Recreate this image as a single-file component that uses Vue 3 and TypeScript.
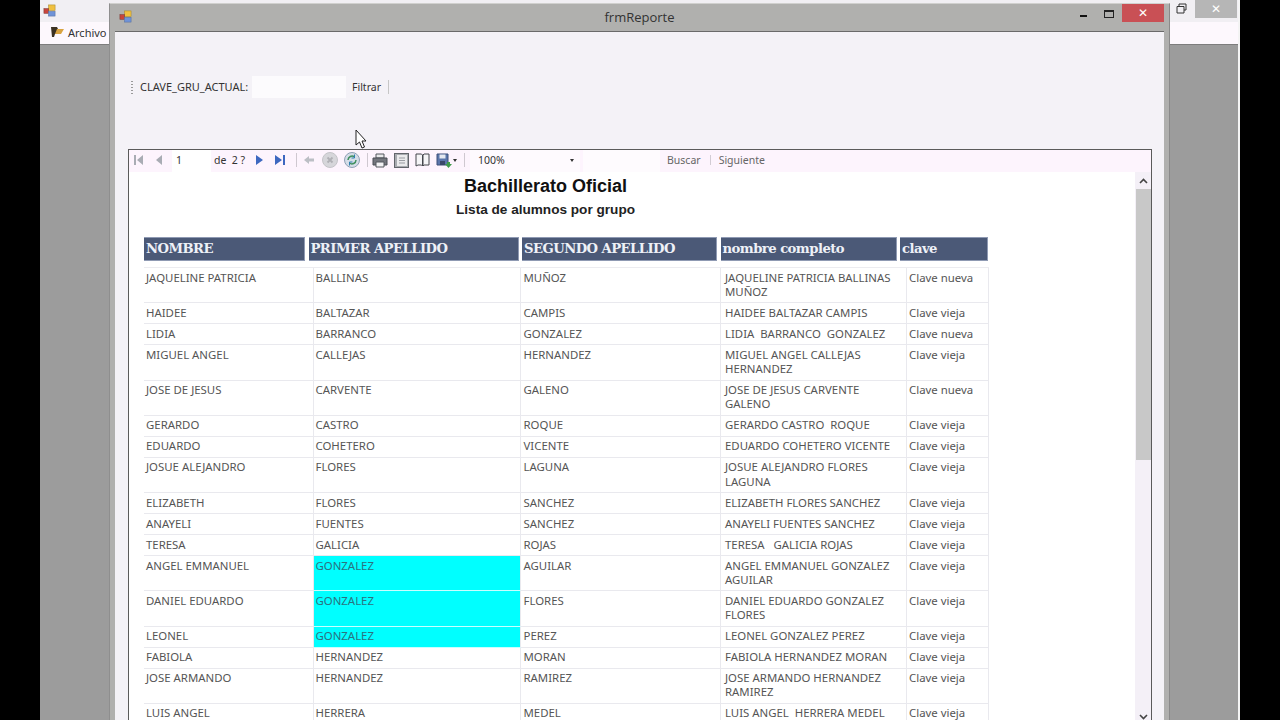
<script setup lang="ts">
interface Row {
  nombre: string
  primer: string
  segundo: string
  completo: string
  clave: string
  hit?: boolean
}

const columns: string[] = ['NOMBRE', 'PRIMER APELLIDO', 'SEGUNDO APELLIDO', 'nombre completo', 'clave']

const rows: Row[] = [
  { nombre: 'JAQUELINE PATRICIA', primer: 'BALLINAS', segundo: 'MUÑOZ', completo: 'JAQUELINE PATRICIA BALLINAS MUÑOZ', clave: 'Clave nueva' },
  { nombre: 'HAIDEE', primer: 'BALTAZAR', segundo: 'CAMPIS', completo: 'HAIDEE BALTAZAR CAMPIS', clave: 'Clave vieja' },
  { nombre: 'LIDIA', primer: 'BARRANCO', segundo: 'GONZALEZ', completo: 'LIDIA  BARRANCO  GONZALEZ', clave: 'Clave nueva' },
  { nombre: 'MIGUEL ANGEL', primer: 'CALLEJAS', segundo: 'HERNANDEZ', completo: 'MIGUEL ANGEL CALLEJAS HERNANDEZ', clave: 'Clave vieja' },
  { nombre: 'JOSE DE JESUS', primer: 'CARVENTE', segundo: 'GALENO', completo: 'JOSE DE JESUS CARVENTE GALENO', clave: 'Clave nueva' },
  { nombre: 'GERARDO', primer: 'CASTRO', segundo: 'ROQUE', completo: 'GERARDO CASTRO  ROQUE', clave: 'Clave vieja' },
  { nombre: 'EDUARDO', primer: 'COHETERO', segundo: 'VICENTE', completo: 'EDUARDO COHETERO VICENTE', clave: 'Clave vieja' },
  { nombre: 'JOSUE ALEJANDRO', primer: 'FLORES', segundo: 'LAGUNA', completo: 'JOSUE ALEJANDRO FLORES LAGUNA', clave: 'Clave vieja' },
  { nombre: 'ELIZABETH', primer: 'FLORES', segundo: 'SANCHEZ', completo: 'ELIZABETH FLORES SANCHEZ', clave: 'Clave vieja' },
  { nombre: 'ANAYELI', primer: 'FUENTES', segundo: 'SANCHEZ', completo: 'ANAYELI FUENTES SANCHEZ', clave: 'Clave vieja' },
  { nombre: 'TERESA', primer: 'GALICIA', segundo: 'ROJAS', completo: 'TERESA   GALICIA ROJAS', clave: 'Clave vieja' },
  { nombre: 'ANGEL EMMANUEL', primer: 'GONZALEZ', segundo: 'AGUILAR', completo: 'ANGEL EMMANUEL GONZALEZ AGUILAR', clave: 'Clave vieja', hit: true },
  { nombre: 'DANIEL EDUARDO', primer: 'GONZALEZ', segundo: 'FLORES', completo: 'DANIEL EDUARDO GONZALEZ FLORES', clave: 'Clave vieja', hit: true },
  { nombre: 'LEONEL', primer: 'GONZALEZ', segundo: 'PEREZ', completo: 'LEONEL GONZALEZ PEREZ', clave: 'Clave vieja', hit: true },
  { nombre: 'FABIOLA', primer: 'HERNANDEZ', segundo: 'MORAN', completo: 'FABIOLA HERNANDEZ MORAN', clave: 'Clave vieja' },
  { nombre: 'JOSE ARMANDO', primer: 'HERNANDEZ', segundo: 'RAMIREZ', completo: 'JOSE ARMANDO HERNANDEZ RAMIREZ', clave: 'Clave vieja' },
  { nombre: 'LUIS ANGEL', primer: 'HERRERA', segundo: 'MEDEL', completo: 'LUIS ANGEL  HERRERA MEDEL', clave: 'Clave vieja' },
]
</script>

<template>
  <div class="screen">
    <div class="parent">
      <div class="parent-top">
        <svg class="app-icon" viewBox="0 0 14 14" width="13" height="13">
          <rect x="6" y="1" width="7" height="6" fill="#f0c040" stroke="#a88a30" stroke-width=".6" />
          <rect x="1" y="5" width="5" height="5" fill="#c8443c" stroke="#7e3a34" stroke-width=".6" />
          <rect x="6" y="8" width="7" height="5" fill="#6f93d8" stroke="#56709f" stroke-width=".6" />
        </svg>
        <div class="parent-buttons">
          <svg width="11" height="11" viewBox="0 0 11 11" class="restore">
            <path d="M3 3V1h7v6H8M1 3.5h7v6.5H1z" fill="none" stroke="#333" stroke-width="1" />
          </svg>
          <span class="parent-close">✕</span>
        </div>
      </div>
      <div class="menu">
        <svg width="14" height="12" viewBox="0 0 14 12">
          <path d="M1 1h6l1 2h3L8 8H5l-1 3H2z" fill="#3b3223" />
          <path d="M7 3h7l-3 5H5z" fill="#d9a441" />
        </svg>
        <span>Archivo</span>
      </div>
      <div class="mdi"></div>
    </div>

    <div class="child">
      <div class="title-bar">
        <svg class="child-icon" viewBox="0 0 14 14" width="13" height="13">
          <rect x="6" y="1" width="7" height="6" fill="#f0c040" stroke="#a88a30" stroke-width=".6" />
          <rect x="1" y="5" width="5" height="5" fill="#c8443c" stroke="#7e3a34" stroke-width=".6" />
          <rect x="6" y="8" width="7" height="5" fill="#6f93d8" stroke="#56709f" stroke-width=".6" />
        </svg>
        <span class="title">frmReporte</span>
        <div class="win-buttons">
          <span class="min-btn"></span>
          <span class="max-btn"></span>
          <span class="close-btn">✕</span>
        </div>
      </div>

      <div class="client">
        <div class="filter-strip">
          <span class="grip"></span>
          <span class="filter-label">CLAVE_GRU_ACTUAL:</span>
          <span class="filter-input"></span>
          <span class="filter-btn">Filtrar</span>
          <span class="filter-sep"></span>
        </div>

        <svg class="cursor" width="13" height="20" viewBox="0 0 13 20">
          <path d="M1 1v15l3.5-3 2.5 6 2.5-1-2.5-6H11z" fill="#fff" stroke="#222" stroke-width="1" />
        </svg>

        <div class="viewer">
          <div class="toolbar">
            <svg class="tb-first" width="11" height="12" viewBox="0 0 11 12"><path d="M1 1h2v10H1zM10 1v10L4 6z" fill="#a9acb4" /></svg>
            <svg class="tb-prev" width="8" height="12" viewBox="0 0 8 12"><path d="M7 1v10L1 6z" fill="#a9acb4" /></svg>
            <span class="page-input">1</span>
            <span class="page-of">de&nbsp; 2 ?</span>
            <svg class="tb-next" width="7" height="12" viewBox="0 0 7 12"><path d="M0 1v10l7-5z" fill="#3d68c0" /></svg>
            <svg class="tb-last" width="11" height="12" viewBox="0 0 11 12"><path d="M0 1v10l7-5zM8 1h2v10H8z" fill="#3d68c0" /></svg>
            <span class="tb-sep sep-a"></span>
            <svg class="tb-back" width="10" height="10" viewBox="0 0 10 10"><path d="M5 1v2.500h5v3H5V9L0 5z" fill="#bcbfc5" /></svg>
            <svg class="tb-stop" width="16" height="16" viewBox="0 0 16 16">
              <circle cx="8" cy="8" r="7.500" fill="#d6d6da" stroke="#c4c4c8" />
              <path d="M5.500 5.500l5 5m0-5l-5 5" stroke="#b0b0b5" stroke-width="1.800" />
            </svg>
            <svg class="tb-refresh" width="16" height="16" viewBox="0 0 16 16">
              <circle cx="8" cy="8" r="7.500" fill="#d5dde8" stroke="#8fa0b4" />
              <path d="M4 8a4 4 0 0 1 6.500-3M12 8a4 4 0 0 1-6.500 3" fill="none" stroke="#3f8f5f" stroke-width="1.500" />
              <path d="M10.500 2.500v3.500H7.500M5.500 13.500V10h3" fill="none" stroke="#2f7fb0" stroke-width="1" />
            </svg>
            <span class="tb-sep sep-b"></span>
            <svg class="tb-print" width="16" height="15" viewBox="0 0 16 15">
              <path d="M4 1h8v4H4z" fill="#e8e8ea" stroke="#55585e" />
              <path d="M1 5h14v7H1z" fill="#74777e" stroke="#4b4e55" />
              <path d="M4 9h8v5H4z" fill="#f2f2f4" stroke="#55585e" />
            </svg>
            <svg class="tb-layout" width="15" height="15" viewBox="0 0 15 15">
              <rect x=".5" y=".5" width="14" height="14" fill="#a8abb0" stroke="#62656b" />
              <rect x="3" y="2" width="10" height="11" fill="#eaeaec" />
              <path d="M5 5h6M5 7.500h6M5 10h6" stroke="#9a9da3" />
            </svg>
            <svg class="tb-book" width="15" height="14" viewBox="0 0 15 14">
              <path d="M1 1h5.500l1 1v11l-1-1H3L1 13zM8 2l1-1h5v11H9l-1 1z" fill="#f5f5f7" stroke="#44474d" />
            </svg>
            <svg class="tb-save" width="16" height="15" viewBox="0 0 16 15">
              <path d="M1 1h11v11H1z" fill="#5b76ab" stroke="#3d4f78" />
              <path d="M3.500 1.500h6v4h-6z" fill="#e6e9f0" />
              <path d="M4 8h5v4H4z" fill="#39486a" />
              <path d="M11 9h3v2h2l-3.500 4L9 11h2z" fill="#3f9a4a" />
            </svg>
            <span class="caret save-caret"></span>
            <span class="tb-sep sep-c"></span>
            <span class="zoom-box">100%<span class="caret"></span></span>
            <span class="search-box"></span>
            <span class="tb-link">Buscar</span>
            <span class="tb-link-sep"></span>
            <span class="tb-link">Siguiente</span>
          </div>

          <div class="viewer-body">
            <div class="report">
              <div class="report-head">
                <h1>Bachillerato Oficial</h1>
                <h2>Lista de alumnos por grupo</h2>
              </div>

              <div class="header-row">
                <div v-for="c in columns" :key="c" class="header-cell">{{ c }}</div>
              </div>

              <div class="data-grid">
                <template v-for="r in rows" :key="r.completo">
                  <div class="cell">{{ r.nombre }}</div>
                  <div class="cell" :class="{ hit: r.hit }">{{ r.primer }}</div>
                  <div class="cell">{{ r.segundo }}</div>
                  <div class="cell">{{ r.completo }}</div>
                  <div class="cell">{{ r.clave }}</div>
                </template>
              </div>
            </div>

            <div class="scrollbar">
              <svg class="chev" width="9" height="6" viewBox="0 0 9 6"><path d="M1 5l3.500-3.500L8 5" fill="none" stroke="#444" stroke-width="1.600" /></svg>
              <div class="thumb"></div>
              <svg class="chev chev-down" width="9" height="6" viewBox="0 0 9 6"><path d="M1 1l3.500 3.500L8 1" fill="none" stroke="#444" stroke-width="1.600" /></svg>
            </div>
          </div>
        </div>
      </div>
    </div>
  </div>
</template>

<style>
html,
body {
  margin: 0;
  background: #000;
}
</style>

<style scoped>
.screen {
  position: relative;
  width: 1280px;
  height: 720px;
  overflow: hidden;
  background: #000;
  font-family: "Open Sans", "Noto Sans", sans-serif;
}

.parent {
  position: absolute;
  left: 40px;
  top: 0;
  width: 1200px;
  height: 720px;
  display: flex;
  flex-direction: column;
  box-sizing: border-box;
  border-right: 2px solid #f4f4f4;
}

.parent-top {
  height: 22px;
  background: #f1eff3;
  display: flex;
  justify-content: space-between;
}

.app-icon {
  margin: 4px 0 0 3px;
}

.parent-buttons {
  display: flex;
  align-items: flex-start;
}

.restore {
  margin: 3px 8px 0 0;
}

.parent-close {
  width: 42px;
  height: 18px;
  margin-right: 1px;
  background: #b6b6b6;
  color: #fff;
  font-size: 12px;
  line-height: 18px;
  text-align: center;
}

.menu {
  height: 22px;
  background: #fdf8fd;
  display: flex;
  align-items: center;
  gap: 4px;
  padding: 0 0 2px 10px;
  box-sizing: border-box;
  font-family: "Noto Sans", sans-serif;
  font-size: 11px;
  color: #333;
}

.mdi {
  flex: 1;
  background: #9c9c9c;
  border-top: 1px solid #7d7d7d;
}

.child {
  position: absolute;
  left: 109px;
  top: 3px;
  width: 1061px;
  height: 730px;
  box-sizing: border-box;
  background: #b0b0ae;
  border-top: 1px solid #d0d0ce;
  border-right: 1px solid #8a8a8a;
  border-left: 1px solid #8e8e8e;
  display: flex;
  flex-direction: column;
  padding: 0 5px;
}

.title-bar {
  height: 27px;
  flex: none;
  position: relative;
  display: flex;
  align-items: flex-start;
  justify-content: center;
}

.child-icon {
  position: absolute;
  left: 4px;
  top: 6px;
}

.title {
  font-size: 13px;
  color: #333;
  margin-top: 4px;
}

.win-buttons {
  position: absolute;
  right: 0;
  top: 0;
  display: flex;
  align-items: flex-start;
}

.min-btn {
  width: 7px;
  height: 2px;
  margin: 11px 17px 0 0;
  background: #111;
}

.max-btn {
  box-sizing: border-box;
  width: 10px;
  height: 8px;
  margin: 6px 8px 0 0;
  border: 1px solid #222;
  border-top-width: 2px;
}

.close-btn {
  width: 42px;
  height: 18px;
  background: #c95055;
  color: #fff;
  font-size: 12px;
  line-height: 18px;
  text-align: center;
}

.client {
  flex: 1;
  background: #f4f2f7;
  border-top: 1px solid #6a6a6a;
  position: relative;
  display: flex;
  flex-direction: column;
  padding: 44px 12px 0 13px;
}

.filter-strip {
  height: 22px;
  display: flex;
  align-items: center;
  flex: none;
  font-size: 11px;
  color: #333;
  font-family: "Noto Sans", sans-serif;
}

.grip {
  width: 2px;
  height: 13px;
  margin: 0 7px 0 3px;
  background-image: linear-gradient(#9a9a9a 50%, transparent 50%);
  background-size: 2px 3px;
}

.filter-label {
  width: 112px;
  margin-bottom: 2px;
  white-space: nowrap;
}

.filter-input {
  width: 94px;
  height: 22px;
  background: #fcfbfd;
}

.filter-btn {
  margin-left: 6px;
  width: 36px;
  font-size: 10.500px;
}

.filter-sep {
  width: 1px;
  height: 14px;
  background: #c6c6c6;
}

.cursor {
  position: absolute;
  left: 240px;
  top: 97px;
}

.viewer {
  margin-top: 51px;
  flex: 1;
  border: 1px solid #5a5a5a;
  border-bottom: 0;
  background: #fff;
  display: flex;
  flex-direction: column;
  min-height: 0;
}

.toolbar {
  height: 22px;
  box-sizing: border-box;
  padding-bottom: 2px;
  flex: none;
  background: #fdf4fd;
  display: flex;
  align-items: center;
  font-size: 10.500px;
  color: #333;
  font-family: "Noto Sans", sans-serif;
}

.tb-first { margin-left: 4px; }
.tb-prev { margin-left: 11px; }

.page-input {
  width: 35px;
  margin-left: 9px;
  padding-left: 4px;
  height: 22px;
  line-height: 20px;
  margin-bottom: -2px;
  background: #fff;
}

.page-of {
  margin-left: 3px;
  width: 34px;
}

.tb-next { margin-left: 8px; }
.tb-last { margin-left: 12px; }

.tb-sep {
  width: 1px;
  height: 14px;
  background: #cfc8d0;
}

.sep-a { margin-left: 10px; }
.tb-back { margin-left: 7px; }
.tb-stop { margin-left: 8px; }
.tb-refresh { margin-left: 6px; }
.sep-b { margin-left: 7px; }
.tb-print { margin-left: 4px; }
.tb-layout { margin-left: 6px; }
.tb-book { margin-left: 6px; }
.tb-save { margin-left: 6px; }

.caret {
  width: 0;
  height: 0;
  border-left: 2.500px solid transparent;
  border-right: 2.500px solid transparent;
  border-top: 3px solid #333;
}

.save-caret { margin-left: 1px; }
.sep-c { margin-left: 7px; }

.zoom-box {
  margin-left: 5px;
  width: 110px;
  height: 22px;
  margin-bottom: -2px;
  box-sizing: border-box;
  padding: 0 6px 2px 8px;
  background: #fefafe;
  display: flex;
  align-items: center;
  justify-content: space-between;
}

.search-box {
  margin-left: 3px;
  width: 77px;
  height: 22px;
  margin-bottom: -2px;
  background: #fefbfe;
}

.tb-link {
  color: #666;
}

.search-box + .tb-link { margin-left: 7px; }

.tb-link-sep {
  width: 1px;
  height: 10px;
  margin: 0 8px 0 9px;
  background: #d2ccd4;
}

.viewer-body {
  flex: 1;
  display: flex;
  min-height: 0;
}

.report {
  flex: 1;
  background: #fff;
  padding-left: 15px;
  overflow: hidden;
}

.report-head {
  width: 803px;
  text-align: center;
}

.report-head h1 {
  margin: 3px 0 0;
  font: bold 18px/22px "Liberation Sans", sans-serif;
  color: #111;
}

.report-head h2 {
  margin: 5px 0 0;
  font: bold 13.600px/16px "Liberation Sans", sans-serif;
  color: #222;
}

.header-row {
  margin-top: 19px;
  width: 844px;
  display: grid;
  grid-template-columns: 161px 210px 195px 176px 88px;
  justify-content: space-between;
}

.header-cell {
  height: 24px;
  box-sizing: border-box;
  padding-left: 2px;
  background: #4b5977;
  border: 1px solid #8f9ab3;
  border-left: 0;
  color: #eef1f7;
  font: bold 13.200px/22px "DejaVu Serif", "Liberation Serif", serif;
  letter-spacing: -.550px;
}

.data-grid {
  margin-top: 6px;
  width: 845px;
  display: grid;
  grid-template-columns: 169.500px 207px 200.500px 186px 82px;
  border-top: 1px solid #ececf0;
  font: 11.400px/14.300px "Noto Sans", sans-serif;
  color: #555;
}

.cell {
  box-sizing: border-box;
  padding: 2.500px 4px 3.200px 2px;
  border-bottom: 1px solid #e9e9ee;
  border-right: 1px solid #e9e9ee;
  white-space: pre-wrap;
}

.cell:nth-child(5n + 3) {
  padding-left: 3px;
}

.cell:nth-child(5n + 4) {
  padding-left: 4px;
}

.hit {
  background: #00ffff;
  color: #2b7280;
  border-bottom-color: #c8ffff;
}

.scrollbar {
  width: 16px;
  flex: none;
  background: #f4f0f7;
  display: flex;
  flex-direction: column;
  align-items: center;
}

.chev {
  flex: none;
  margin-top: 6px;
}

.thumb {
  flex: none;
  width: 15px;
  height: 271px;
  margin-top: 5px;
  background: #c8c8c8;
}

.chev-down {
  margin-top: 254px;
}
</style>
